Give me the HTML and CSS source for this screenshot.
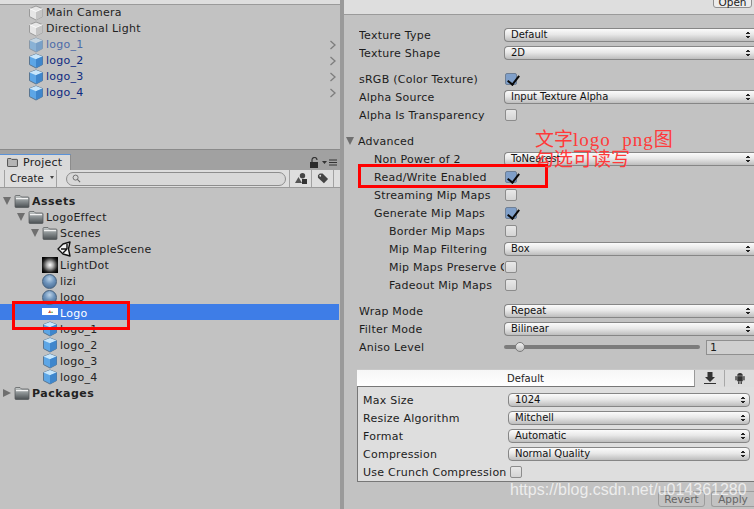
FILE: index.html
```html
<!DOCTYPE html>
<html lang="en">
<head>
<meta charset="utf-8">
<title>Unity Texture Import Settings</title>
<link rel="stylesheet" href="styles.css">
</head>
<body>
<svg class="defs" width="0" height="0" aria-hidden="true">
  <defs>
    <linearGradient id="folderg" x1="0" y1="0" x2="0" y2="1"><stop offset="0" stop-color="#c8cccc"/><stop offset=".45" stop-color="#8c9294"/><stop offset="1" stop-color="#4a4f52"/></linearGradient>
    <symbol id="cube-grey" viewBox="0 0 16 16"><path d="M8 1l6.5 2.6v8L8 15l-6.5-3.400v-8z" fill="#e6e6e6" stroke="#9a9a9a"/><path d="M8 6.500l6.500-2.900v8L8 15z" fill="#c4c4c4"/><path d="M1.500 3.600L8 6.500l6.500-2.900" fill="none" stroke="#fafafa"/></symbol>
    <symbol id="cube-blue" viewBox="0 0 16 16"><path d="M8 1l6.500 2.600v8L8 15l-6.500-3.400v-8z" fill="#5da6e6" stroke="#5a7590"/><path d="M8 1l6.500 2.600L8 6.300 1.500 3.600z" fill="#c8e6fb"/><path d="M8 6.300l6.500-2.700v8L8 15z" fill="#3f86cc"/></symbol>
    <symbol id="folder" viewBox="0 0 16 14"><path d="M1 3.500V2.500q0-1 1-1h4l1.500 1.500h6.500q1 0 1 1v8.500q0 1-1 1H2q-1 0-1-1z" fill="url(#folderg)" stroke="#505456" stroke-width=".7"/><path d="M2 4.600h12" stroke="#f2f2f2" stroke-width="1.200"/></symbol>
    <symbol id="chev" viewBox="0 0 8 10"><path d="M1.500 1l4.500 4-4.500 4" fill="none" stroke="#7d7d7d" stroke-width="1.300"/></symbol>
  </defs>
</svg>

<div class="app">
  <section class="left">
    <div class="hier-top"></div>
    <div class="hierarchy">
      <div class="row hrow"><svg class="ic16"><use href="#cube-grey"/></svg><span>Main Camera</span></div>
      <div class="row hrow"><svg class="ic16"><use href="#cube-grey"/></svg><span>Directional Light</span></div>
      <div class="row hrow prefab faded"><svg class="ic16"><use href="#cube-blue"/></svg><span>logo_1</span><svg class="chev"><use href="#chev"/></svg></div>
      <div class="row hrow prefab"><svg class="ic16"><use href="#cube-blue"/></svg><span>logo_2</span><svg class="chev"><use href="#chev"/></svg></div>
      <div class="row hrow prefab"><svg class="ic16"><use href="#cube-blue"/></svg><span>logo_3</span><svg class="chev"><use href="#chev"/></svg></div>
      <div class="row hrow prefab"><svg class="ic16"><use href="#cube-blue"/></svg><span>logo_4</span><svg class="chev"><use href="#chev"/></svg></div>
    </div>

    <div class="tabstrip">
      <div class="tab"><svg class="tabfolder" viewBox="0 0 12 10"><path d="M.5 2V1.200q0-.7.700-.7h3l1 1h5.600q.7 0 .7.700v6.600q0 .7-.7.700H1.200q-.7 0-.7-.7z" fill="#b4b4b4" stroke="#444"/></svg><span>Project</span></div>
      <div class="tabtools">
        <svg class="lock" viewBox="0 0 9 11"><path d="M2 5V3a2.500 2.500 0 0 1 5 0" fill="none" stroke="#333" stroke-width="1.200"/><rect y="5" width="8" height="6" fill="#2a2a2a"/></svg>
        <svg class="tabmenu" viewBox="0 0 15 7"><path d="M0 2h5L2.500 5z" fill="#333"/><path d="M7 1h8M7 3.500h8M7 6h8" stroke="#333" stroke-width="1"/></svg>
      </div>
    </div>
    <div class="toolbar">
      <div class="tb-create"><span>Create</span><i class="caret"></i></div>
      <div class="search"><svg class="lens" viewBox="0 0 10 10"><circle cx="4" cy="4" r="2.800" fill="none" stroke="#666"/><path d="M6 6l3 3" stroke="#666" stroke-width="1.200"/></svg></div>
      <div class="tb-btn"><svg viewBox="0 0 12 11"><circle cx="7.500" cy="2.800" r="2.700" fill="#444"/><path d="M3.500 4L7 10H0z" fill="#555"/><rect x="7" y="6" width="5" height="5" fill="#333"/></svg></div>
      <div class="tb-btn"><svg viewBox="0 0 12 12"><path d="M.5 2.500L2.500.5h3l6 6-4.500 4.800-6.500-6z" fill="#444"/><circle cx="3" cy="3" r="1" fill="#ddd"/></svg></div>
      <div class="tb-end"></div>
    </div>
    <div class="project">
      <div class="row pad0 strong"><i class="tri tri-down"></i><svg class="folder"><use href="#folder"/></svg><span>Assets</span></div>
      <div class="row pad1"><i class="tri tri-down"></i><svg class="folder"><use href="#folder"/></svg><span>LogoEffect</span></div>
      <div class="row pad2"><i class="tri tri-down"></i><svg class="folder"><use href="#folder"/></svg><span>Scenes</span></div>
      <div class="row pad3"><svg class="ic16" viewBox="0 0 16 16"><path d="M2 8l5-5 7-2-1.500 7 1.500 7-7-2z" fill="#f2f2f2" stroke="#111" stroke-width="1.400" stroke-linejoin="round"/><path d="M5 8h6M11 8V3M11 8l-4 4" stroke="#111" stroke-width="1.400" fill="none"/></svg><span>SampleScene</span></div>
      <div class="row padf"><i class="glow"></i><span>LightDot</span></div>
      <div class="row padf"><i class="sphere"></i><span>lizi</span></div>
      <div class="row padf"><i class="sphere"></i><span>logo</span></div>
      <div class="row padf selected"><i class="thumb"><svg viewBox="0 0 16 6"><path d="M6 5l2-3 1 3z" fill="#d5502f"/><path d="M9 5l1-2 1 2z" fill="#58a55c"/></svg></i><span>Logo</span></div>
      <div class="row padf"><svg class="ic16"><use href="#cube-blue"/></svg><span>logo_1</span></div>
      <div class="row padf"><svg class="ic16"><use href="#cube-blue"/></svg><span>logo_2</span></div>
      <div class="row padf"><svg class="ic16"><use href="#cube-blue"/></svg><span>logo_3</span></div>
      <div class="row padf"><svg class="ic16"><use href="#cube-blue"/></svg><span>logo_4</span></div>
      <div class="row pad0 strong"><i class="tri tri-right"></i><svg class="folder"><use href="#folder"/></svg><span>Packages</span></div>
    </div>
  </section>

  <section class="inspector">
    <div class="insp-head"><button class="open">Open</button></div>
    <div class="props">
      <div class="group">
        <div class="prop"><label>Texture Type</label><div class="popup">Default</div></div>
        <div class="prop"><label>Texture Shape</label><div class="popup">2D</div></div>
      </div>
      <div class="group">
        <div class="prop"><label>sRGB (Color Texture)</label><i class="check on"></i></div>
        <div class="prop"><label>Alpha Source</label><div class="popup">Input Texture Alpha</div></div>
        <div class="prop"><label>Alpha Is Transparency</label><i class="check"></i></div>
      </div>
      <div class="group">
        <div class="prop foldout"><i class="tri tri-down"></i><label>Advanced</label></div>
        <div class="prop in1"><label>Non Power of 2</label><div class="popup">ToNearest</div></div>
        <div class="prop in1"><label>Read/Write Enabled</label><i class="check on"></i></div>
        <div class="prop in1"><label>Streaming Mip Maps</label><i class="check"></i></div>
        <div class="prop in1"><label>Generate Mip Maps</label><i class="check on"></i></div>
        <div class="prop in2"><label>Border Mip Maps</label><i class="check"></i></div>
        <div class="prop in2"><label>Mip Map Filtering</label><div class="popup">Box</div></div>
        <div class="prop in2"><label>Mip Maps Preserve Coverage</label><i class="check"></i></div>
        <div class="prop in2"><label>Fadeout Mip Maps</label><i class="check"></i></div>
      </div>
      <div class="group">
        <div class="prop"><label>Wrap Mode</label><div class="popup">Repeat</div></div>
        <div class="prop"><label>Filter Mode</label><div class="popup">Bilinear</div></div>
        <div class="prop"><label>Aniso Level</label>
          <div class="slider"><div class="track"><i class="knob"></i></div><div class="num">1</div></div>
        </div>
      </div>
    </div>

    <div class="platform">
      <div class="plat-head">
        <div class="plat-title">Default</div>
        <div class="plat-tab"><svg viewBox="0 0 12 12"><path d="M3.500 0h5v5H11L6 10 1 5h2.500z" fill="#333"/><path d="M0 11.500h12" stroke="#333"/></svg></div>
        <div class="plat-tab last"><svg viewBox="0 0 10 13"><path d="M2 4a3 3 0 0 1 6 0z" fill="#333"/><rect x="2" y="4.500" width="6" height="5.500" fill="#333"/><rect y="4.500" width="1.400" height="4.500" fill="#333"/><rect x="8.600" y="4.500" width="1.400" height="4.500" fill="#333"/><rect x="3" y="10" width="1.400" height="3" fill="#333"/><rect x="5.600" y="10" width="1.400" height="3" fill="#333"/></svg></div>
      </div>
      <div class="plat-body">
        <div class="prop"><label>Max Size</label><div class="popup">1024</div></div>
        <div class="prop"><label>Resize Algorithm</label><div class="popup">Mitchell</div></div>
        <div class="prop"><label>Format</label><div class="popup">Automatic</div></div>
        <div class="prop"><label>Compression</label><div class="popup">Normal Quality</div></div>
        <div class="prop"><label>Use Crunch Compression</label><i class="check"></i></div>
      </div>
    </div>
    <div class="actions"><button class="act revert">Revert</button><button class="act apply">Apply</button></div>
  </section>
</div>

<div class="mark mark-logo"></div>
<div class="mark mark-rw"></div>
<div class="note">文字<span class="latin">logo  png</span>图<br>勾选可读写</div>
<div class="watermark">https://blog.csdn.net/u014361280</div>
</body>
</html>
```
FILE: styles.css
```css
* { box-sizing: border-box; }
html, body { margin: 0; padding: 0; }
body {
  width: 754px; height: 509px; overflow: hidden; position: relative;
  font: 11px/16px "DejaVu Sans", sans-serif; letter-spacing: .25px; color: #222;
  background: #c2c2c2;
}
.defs { position: absolute; }
svg { display: block; flex: none; }
i { display: block; flex: none; }

.app { display: flex; height: 509px; }

/* left column */
.left { width: 340px; flex: none; height: 509px; display: flex; flex-direction: column; }
.hier-top { height: 5px; background: #dedede; border-bottom: 1px solid #9a9a9a; }
.hierarchy { height: 145px; border-bottom: 1px solid #8a8a8a; }
.row { height: 16px; display: flex; align-items: center; white-space: nowrap; }
.ic16 { width: 16px; height: 16px; }
.hrow { padding-left: 28px; gap: 2px; }
.prefab { color: #0d2a80; }
.faded { color: #4c6ba8; }
.faded .ic16 { opacity: .55; }
.chev { width: 8px; height: 10px; margin-left: auto; margin-right: 3px; }

.tabstrip { height: 20px; background: #a1a1a1; display: flex; justify-content: space-between; align-items: flex-end; }
.tab { width: 71px; height: 16px; background: #d9d9d9; border-top: 1px solid #5a92d8; border-right: 1px solid #8c8c8c; display: flex; align-items: center; gap: 5px; padding-left: 7px; }
.tabfolder { width: 11px; height: 9px; }
.tabtools { display: flex; align-items: center; gap: 3px; padding: 0 3px 2px 0; }
.lock { width: 9px; height: 11px; }
.tabmenu { width: 15px; height: 7px; }

.toolbar { height: 18px; background: #dedede; border-bottom: 1px solid #9a9a9a; display: flex; align-items: center; padding-left: 4px; }
.tb-create { width: 53px; height: 17px; border: solid #a2a2a2; border-width: 0 1px; display: flex; align-items: center; padding-left: 5px; gap: 6px; font-size: 10px; letter-spacing: .1px; }
.caret { width: 0; height: 0; border: 2.500px solid transparent; border-top: 3px solid #444; border-bottom: 0; margin-top: -3px; }
.search { width: 220px; height: 14px; margin: 0 3px 0 9px; background: #d8d8d8; border: 1px solid #8d8d8d; border-radius: 7px; padding: 1px 0 0 5px; }
.lens { width: 9px; height: 9px; }
.tb-btn { width: 22px; height: 17px; border-left: 1px solid #a2a2a2; display: flex; align-items: center; justify-content: center; }
.tb-btn svg { width: 12px; height: 11px; }
.tb-end { width: 4px; height: 17px; border-left: 1px solid #a2a2a2; }

.project { padding-top: 4px; }
.project .row { padding-top: 2px; }
.project .row span { padding-top: 2px; }
.tri { width: 0; height: 0; border-style: solid; border-color: transparent; }
.tri-down { border-width: 8px 4.500px 0; border-top-color: #6f6f6f; }
.tri-right { border-width: 4.500px 0 4.500px 8px; border-left-color: #6f6f6f; }
.folder { width: 16px; height: 14px; margin: 0 2px 0 3px; }
.pad0 { padding-left: 3px; }
.pad1 { padding-left: 17px; }
.pad2 { padding-left: 31px; }
.pad3 { padding-left: 56px; gap: 2px; }
.padf { padding-left: 42px; gap: 2px; }
.strong { font-weight: bold; letter-spacing: .5px; }
.selected { background: #3e7de7; color: #fff; margin-right: 1px; }
.glow { width: 16px; height: 16px; background: radial-gradient(circle, #fff 0, #aaa 30%, #222 65%, #000 85%); }
.sphere { width: 15px; height: 15px; margin-right: 1px; border-radius: 50%; border: 1px solid #47627e; background: radial-gradient(circle at 50% 30%, #bcd3e8 0, #6d93bb 45%, #3e5f86 100%); }
.thumb { width: 16px; height: 7px; background: #fff; margin-top: -3px; }
.thumb svg { width: 16px; height: 6px; }

/* right column */
.inspector { flex: 1; min-width: 0; border-left: 4px solid #9a9a9a; display: flex; flex-direction: column; }
.insp-head { height: 15px; background: #dedede; border-bottom: 1px solid #9a9a9a; display: flex; justify-content: flex-end; align-items: flex-start; padding-right: 2px; overflow: hidden; }
.open { width: 39px; height: 14px; margin-top: -6px; padding: 0; border: 1px solid #8f8f8f; border-radius: 3px; background: #ececec; font: inherit; font-size: 10.500px; line-height: 14px; color: #222; }

.props { padding: 11px 0 0 15px; }
.group { margin-bottom: 8px; }
.prop { height: 18px; display: flex; align-items: center; color: #1c1c1c; }
.prop label { width: 145px; flex: none; padding-top: 2px; white-space: nowrap; overflow: hidden; }
.in1 { padding-left: 15px; } .in1 label { width: 130px; }
.in2 { padding-left: 30px; } .in2 label { width: 115px; }
.foldout { margin-left: -13px; gap: 4px; } .foldout label { width: auto; }
.popup {
  flex: 1; height: 14px; position: relative; padding-left: 6px; border: 1px solid #868686; border-right: 0; border-radius: 4px 0 0 4px;
  background: linear-gradient(#fbfbfb, #e8e8e8 45%, #bdbdbd);
  font-size: 10px; line-height: 12px; letter-spacing: 0; color: #111;
}
.popup::after { content: ""; position: absolute; right: 4px; top: 2px; width: 4px; height: 8px; background:
  linear-gradient(135deg, transparent 50%, #222 50%) 0 0/2px 3px no-repeat,
  linear-gradient(225deg, transparent 50%, #222 50%) 2px 0/2px 3px no-repeat,
  linear-gradient(45deg, transparent 50%, #222 50%) 0 5px/2px 3px no-repeat,
  linear-gradient(315deg, transparent 50%, #222 50%) 2px 5px/2px 3px no-repeat; }
.check { width: 12px; height: 12px; margin-left: 1px; border: 1px solid #8c8c8c; border-radius: 2px; background: linear-gradient(#e8e8e8, #d4d4d4); position: relative; }
.check.on { background: #7f9fc9; border-color: #6e7f95; }
.check.on::after { content: ""; position: absolute; left: 3.500px; top: -1px; width: 5px; height: 10px; border: solid #0a0a0a; border-width: 0 2px 2px 0; transform: rotate(38deg); }

.slider { flex: 1; display: flex; align-items: center; gap: 6px; }
.track { width: 196px; height: 4px; border-radius: 2px; background: #7c7c7c; position: relative; }
.knob { position: absolute; left: 11px; top: -3px; width: 10px; height: 10px; border-radius: 50%; border: 1px solid #7a7a7a; background: linear-gradient(#f0f0f0, #bfbfbf); }
.num { flex: 1; height: 15px; background: #cfcfcf; border: 1px solid #8f8f8f; border-right: 0; padding-left: 3px; line-height: 13px; }

.platform { margin: 5px 0 0 13px; }
.plat-head { height: 18px; display: flex; background: #ededed; border-top: 1px solid #c8c8c8; }
.plat-title { flex: 1; background: linear-gradient(#f6f6f6, #fff); text-align: center; font-size: 10px; line-height: 17px; letter-spacing: .1px; border-bottom: 1px solid #777; border-right: 1px solid #999; }
.plat-tab { width: 30px; display: flex; align-items: center; justify-content: center; background: #dcdcdc; border-right: 1px solid #a8a8a8; border-bottom: 1px solid #dcdcdc; }
.plat-tab.last { width: 29px; border-right: 0; }
.plat-tab svg { width: 12px; height: 12px; }
.plat-body { height: 95px; padding: 4px 0 0 5px; background: #dedede; border: solid #777; border-width: 0 0 1px 1px; }
.plat-body .prop { padding-right: 4px; }
.plat-body label { width: 145px; overflow: visible; }
.plat-body .popup { border-right: 1px solid #868686; border-radius: 4px; }
.plat-body .check { margin-left: 2px; }

.actions { display: flex; justify-content: flex-end; gap: 6px; padding-top: 9px; }
.act { height: 16px; padding: 0; border: 1px solid #9c9c9c; border-radius: 3px; background: transparent; font: inherit; font-size: 10.500px; line-height: 14px; color: #666; }
.revert { width: 47px; }
.apply { width: 43px; border-right: 0; border-radius: 3px 0 0 3px; }

/* annotations laid over the screenshot */
.mark { position: absolute; border: 3px solid #ff0000; }
.mark-logo { left: 12px; top: 301px; width: 118px; height: 29px; }
.mark-rw { left: 358px; top: 164px; width: 190px; height: 24px; }
.note { position: absolute; left: 535px; top: 130px; font: 19px/20px "Liberation Serif", "Noto Sans CJK SC", serif; letter-spacing: 0; color: #ff3a3a; white-space: pre; }
.latin { letter-spacing: 1px; }
.watermark { position: absolute; left: 510px; top: 481px; font: 16px/18px "Liberation Sans", sans-serif; letter-spacing: 0; color: rgba(255,255,255,.72); white-space: nowrap; }
```
